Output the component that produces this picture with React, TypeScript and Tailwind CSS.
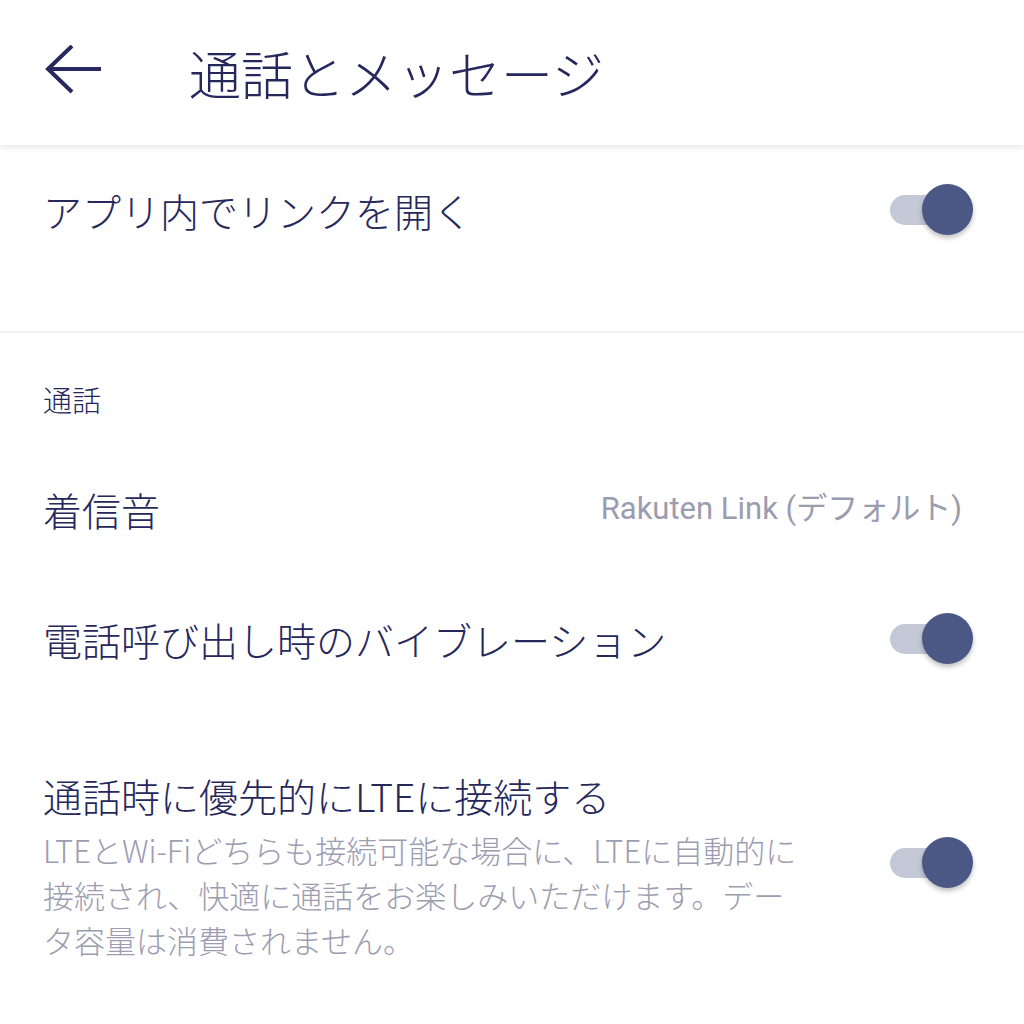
import React from "react";

const jp = "font-['Noto_Sans_CJK_JP','Noto_Sans',sans-serif]";

function Toggle() {
  return (
    <div className="relative h-[51px] w-[83px] shrink-0">
      <div className="absolute left-0 top-[11px] h-[30px] w-[70px] rounded-full bg-[#c5c9d7]" />
      <div className="absolute right-0 top-0 h-[51px] w-[51px] rounded-full bg-[#4b5784] shadow-[0_3px_5px_rgba(0,0,0,0.25)]" />
    </div>
  );
}

export default function App() {
  return (
    <div className={`min-h-[1024px] w-[1024px] bg-white font-light text-[#26285c] ${jp}`}>
      {/* header */}
      <header className="relative z-10 flex h-[145px] items-center bg-white pl-[45px] shadow-[0_3px_6px_rgba(0,0,0,0.09)]">
        <svg width="58" height="50" viewBox="0 0 58 50" className="mt-[-6px]">
          <path
            d="M56 24H3M27 1L3 24l24 23"
            fill="none"
            stroke="#27295e"
            strokeWidth="4"
          />
        </svg>
        <h1 className="ml-[86px] text-[52px] leading-none">通話とメッセージ</h1>
      </header>

      {/* open links in app */}
      <section className="flex h-[188px] items-start border-b-2 border-[#efeff1] pl-[43px] pr-[51px]">
        <div className="mt-[39px] flex w-full items-center justify-between">
          <span className="text-[39px] leading-[48px]">アプリ内でリンクを開く</span>
          <Toggle />
        </div>
      </section>

      {/* calls section */}
      <div className="pl-[43px] pt-[46px] text-[29px] leading-[40px]">通話</div>

      <div className="mt-[66px] flex items-center justify-between pl-[43px] pr-[62px]">
        <span className="text-[39px] leading-[48px]">着信音</span>
        <span className="font-['Roboto','Noto_Sans_CJK_JP',sans-serif] text-[31px] font-normal text-[#9c9cb0]">
          Rakuten Link (デフォルト)
        </span>
      </div>

      <div className="mt-[80px] flex items-center justify-between pl-[43px] pr-[51px]">
        <span className="text-[39px] leading-[48px]">電話呼び出し時のバイブレーション</span>
        <Toggle />
      </div>

      <div className="mt-[107px] flex items-start justify-between pl-[43px] pr-[51px]">
        <div>
          <div className="text-[39px] leading-[48px]">通話時に優先的にLTEに接続する</div>
          <p className="mt-[8px] text-[31px] leading-[45px] text-[#9d9db1]">
            LTEとWi-Fiどちらも接続可能な場合に、LTEに自動的に
            <br />
            接続され、快適に通話をお楽しみいただけます。デー
            <br />
            タ容量は消費されません。
          </p>
        </div>
        <div className="mt-[66px]">
          <Toggle />
        </div>
      </div>
    </div>
  );
}
